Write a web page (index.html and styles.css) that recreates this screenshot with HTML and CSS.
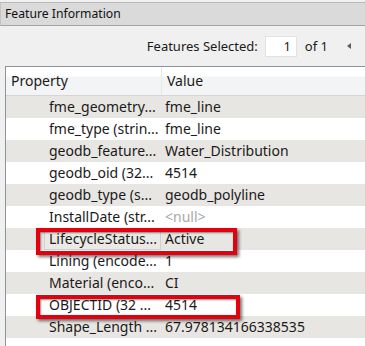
FILE: index.html
```html
<!DOCTYPE html>
<html lang="en">
<head>
    <meta charset="UTF-8">
    <meta name="viewport" content="width=device-width, initial-scale=1.0">
    <title>Feature Information</title>
    <link rel="stylesheet" href="styles.css">
</head>
<body>

    <div class="titlebar">Feature Information</div>

    <div class="toolbar">
        <span class="toolbar-label">Features Selected:</span>
        <span class="page-input">1</span>
        <span class="page-total">of 1</span>
        <span class="arrow-left"></span>
    </div>

    <div class="grid">
        <div class="grid-head">
            <div class="col-prop">Property</div>
            <div class="col-value">Value</div>
        </div>

        <div class="row alt">
            <div class="prop">fme_geometry...</div>
            <div class="value">fme_line</div>
        </div>
        <div class="row">
            <div class="prop">fme_type (strin...</div>
            <div class="value">fme_line</div>
        </div>
        <div class="row alt">
            <div class="prop">geodb_feature...</div>
            <div class="value">Water_Distribution</div>
        </div>
        <div class="row">
            <div class="prop">geodb_oid (32...</div>
            <div class="value">4514</div>
        </div>
        <div class="row alt">
            <div class="prop">geodb_type (s...</div>
            <div class="value">geodb_polyline</div>
        </div>
        <div class="row">
            <div class="prop">InstallDate (str...</div>
            <div class="value null">&lt;null&gt;</div>
        </div>
        <div class="row alt current">
            <div class="prop">LifecycleStatus...</div>
            <div class="value">Active</div>
        </div>
        <div class="row">
            <div class="prop">Lining (encode...</div>
            <div class="value">1</div>
        </div>
        <div class="row alt">
            <div class="prop">Material (enco...</div>
            <div class="value">CI</div>
        </div>
        <div class="row">
            <div class="prop">OBJECTID (32 ...</div>
            <div class="value">4514</div>
        </div>
        <div class="row alt">
            <div class="prop">Shape_Length ...</div>
            <div class="value">67.978134166338535</div>
        </div>
        <div class="row">
            <div class="prop"></div>
            <div class="value"></div>
        </div>
    </div>

    <!-- red annotation boxes drawn over the grid -->
    <div class="mark mark-lifecycle"></div>
    <div class="mark mark-objectid"></div>

</body>
</html>
```

FILE: styles.css
```css
body {
    font-family: "Noto Sans", "Open Sans", sans-serif;
    font-size: 14px;
    color: #1a1a1a;
    background-color: #f0f0f0;
    margin: 0;
    width: 365px;
    height: 346px;
    overflow: hidden;
    position: relative;
}
.titlebar {
    margin-top: 2px;
    height: 22px;
    line-height: 22px;
    padding-left: 4px;
    background-color: #dadada;
    border-top: 1px solid #b9b9b9;
    border-bottom: 1px solid #a3a3a3;
    border-left: 1px solid #c4c4c4;
    font-size: 12.2px;
    color: #111111;
}
.toolbar {
    display: flex;
    justify-content: flex-end;
    align-items: center;
    height: 40px;
    padding-right: 14px;
    font-size: 13px;
}
.toolbar-label {
    margin-right: 7px;
}
.page-input {
    width: 25px;
    height: 19px;
    line-height: 19px;
    padding-right: 5px;
    text-align: right;
    background-color: #ffffff;
    border: 1px solid #e2e2e2;
    margin-right: 8px;
}
.page-total {
    margin-right: 19px;
}
.arrow-left {
    width: 0;
    height: 0;
    border-top: 3.5px solid transparent;
    border-bottom: 3.5px solid transparent;
    border-right: 4px solid #5c5c5c;
}
.grid {
    margin-left: 5px;
    background-color: #ffffff;
    border-top: 1px solid #8e9299;
    border-left: 1px solid #8e9299;
}
.grid-head {
    display: flex;
    height: 28px;
    line-height: 28px;
    background: linear-gradient(#ffffff 0, #ffffff 9px, #f3f4f6 10px, #f3f4f6 100%);
    border-bottom: 1px solid #d5d5d5;
}
.col-prop {
    width: 150px;
    padding-left: 5px;
    border-right: 1px solid #e4e6e9;
}
.col-value {
    padding-left: 5px;
}
.row {
    display: flex;
    height: 22px;
    line-height: 22px;
    background-color: #ffffff;
}
.row.alt {
    background-color: #e8e6e2;
}
.prop {
    width: 112px;
    margin-left: 43px;
    white-space: nowrap;
    overflow: hidden;
}
.row.current .prop {
    box-shadow: inset 0 0 0 1px #d2d0cc;
    margin-left: 38px;
    width: 112px;
    padding-left: 5px;
    background-color: #ebe9e5;
}
.value {
    padding-left: 4px;
    white-space: nowrap;
}
.value.null {
    color: #a8a8a8;
}
.mark {
    position: absolute;
    left: 36px;
    border: 4px solid #e3000f;
    box-shadow: 2px 2px 3px rgba(0, 0, 0, 0.55), inset 1px 1px 2px rgba(0, 0, 0, 0.45);
}
.mark-lifecycle {
    top: 228px;
    width: 193px;
    height: 19px;
}
.mark-objectid {
    top: 295px;
    width: 196px;
    height: 16px;
}
```
